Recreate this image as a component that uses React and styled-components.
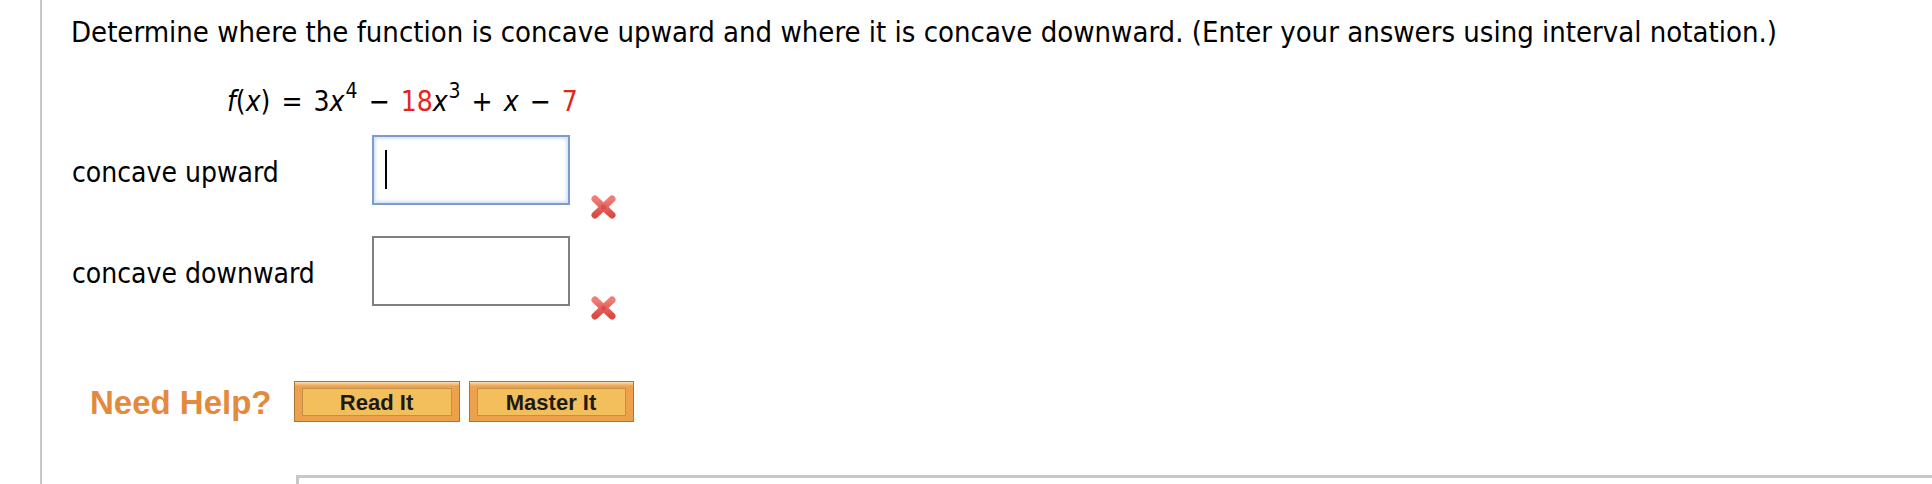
import React from "react";
import styled, { createGlobalStyle } from "styled-components";

const Global = createGlobalStyle`
  html, body { margin: 0; padding: 0; background: #fff; }
  body { font-family: "DejaVu Sans Condensed", "DejaVu Sans", sans-serif; color: #000; }
`;

const Page = styled.div`
  display: flex;
  height: 484px;
  overflow: hidden;
`;

const Rail = styled.div`
  width: 40px;
  flex: none;
  border-right: 2px solid #c8c8c8;
`;

const Content = styled.div`
  flex: 1;
  padding: 15px 0 0 28px;
  display: flex;
  flex-direction: column;
`;

const Title = styled.div`
  font-size: 29px;
  line-height: 34px;
  white-space: nowrap;
  padding-left: 1px;
`;

const Formula = styled.div`
  margin-top: 33px;
  padding-left: 157px;
  font-size: 28px;
  line-height: 40px;
  word-spacing: 3px;
  white-space: nowrap;
`;

const Var = styled.i`
  font-style: italic;
`;

const Red = styled.span`
  color: #e3261c;
`;

const Sup = styled.sup`
  font-size: 21px;
  vertical-align: 0;
  position: relative;
  top: -13px;
  margin-left: 1px;
`;

const Rows = styled.div`
  margin-top: 11px;
  display: flex;
  flex-direction: column;
  gap: 31px;
`;

const Row = styled.div`
  display: flex;
  align-items: flex-start;
  height: 70px;
`;

const Label = styled.div`
  width: 300px;
  padding-left: 2px;
  margin-top: 21px;
  font-size: 28px;
  line-height: 34px;
`;

const Field = styled.div`
  position: relative;
  width: 198px;
  height: 70px;
  box-sizing: border-box;
  background: #fff;
  border: ${(p) => (p.$focused ? "2px solid #7b9dca" : "2px solid #808080")};
  box-shadow: ${(p) =>
    p.$focused ? "inset 0 0 3px 2px #d6e4f5" : "none"};
`;

const Caret = styled.span`
  position: absolute;
  left: 11px;
  top: 13px;
  width: 2px;
  height: 39px;
  background: #000;
`;

const Mark = styled.svg`
  flex: none;
  margin-left: 20px;
  margin-top: 59px;
  width: 27px;
  height: 26px;
`;

const HelpRow = styled.div`
  margin-top: 75px;
  display: flex;
  align-items: center;
  height: 41px;
`;

const HelpText = styled.span`
  font-family: "Liberation Sans", Arial, sans-serif;
  font-weight: bold;
  font-size: 33px;
  color: #e38a3c;
  margin-left: 20px;
  margin-right: 22px;
  margin-top: 3px;
`;

const Btn = styled.div`
  box-sizing: border-box;
  width: ${(p) => p.$w}px;
  height: 41px;
  margin-right: 9px;
  padding: 6px 7px 5px 7px;
  border: 1px solid #a8773b;
  background: linear-gradient(#fbe3b8 0px, #efa24b 4px, #eda04a 100%);
  display: flex;
`;

const BtnInner = styled.div`
  flex: 1;
  border: 1.5px solid #c1904a;
  background: #f3bf5d;
  display: flex;
  align-items: center;
  justify-content: center;
  font-family: "Liberation Sans", Arial, sans-serif;
  font-weight: bold;
  font-size: 22px;
  color: #1c1a14;
  padding-top: 2px;
`;

const Bottom = styled.div`
  margin-top: 53px;
  margin-left: 226px;
  height: 40px;
  border-top: 3px solid #c8c8c8;
  border-left: 3px solid #c8c8c8;
`;

const Cross = () => (
  <Mark viewBox="0 0 27 26">
    <defs>
      <linearGradient id="xg" x1="0" y1="0" x2="0" y2="1">
        <stop offset="0" stopColor="#f07c78" />
        <stop offset="1" stopColor="#dc4a44" />
      </linearGradient>
    </defs>
    <g stroke="url(#xg)" strokeWidth="7" strokeLinecap="round">
      <line x1="5" y1="5" x2="22" y2="21" />
      <line x1="22" y1="5" x2="5" y2="21" />
    </g>
    <circle cx="13.5" cy="13" r="2.5" fill="#d8403a" opacity="0.6" />
  </Mark>
);

export default function App() {
  return (
    <>
      <Global />
      <Page>
        <Rail />
        <Content>
          <Title>
            Determine where the function is concave upward and where it is
            concave downward. (Enter your answers using interval notation.)
          </Title>
          <Formula>
            <Var>f</Var>(<Var>x</Var>) = 3<Var>x</Var>
            <Sup>4</Sup> − <Red>18</Red>
            <Var>x</Var>
            <Sup>3</Sup> + <Var>x</Var> − <Red>7</Red>
          </Formula>
          <Rows>
            <Row>
              <Label>concave upward</Label>
              <Field $focused>
                <Caret />
              </Field>
              <Cross />
            </Row>
            <Row>
              <Label>concave downward</Label>
              <Field />
              <Cross />
            </Row>
          </Rows>
          <HelpRow>
            <HelpText>Need Help?</HelpText>
            <Btn $w={166}>
              <BtnInner>Read It</BtnInner>
            </Btn>
            <Btn $w={165}>
              <BtnInner>Master It</BtnInner>
            </Btn>
          </HelpRow>
          <Bottom />
        </Content>
      </Page>
    </>
  );
}
